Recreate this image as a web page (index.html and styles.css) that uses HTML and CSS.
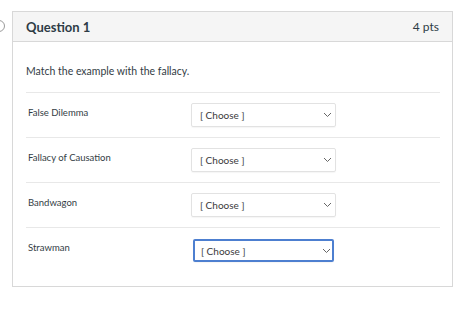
FILE: index.html
```html
<!DOCTYPE html>
<html>
<head>
<meta charset="utf-8">
<link rel="stylesheet" href="styles.css">
</head>
<body>
<div class="page">
  <span class="marker"></span>
  <div class="card">
    <div class="card-header">
      <span class="title">Question 1</span>
      <span class="pts">4 pts</span>
    </div>
    <div class="card-body">
      <p class="prompt">Match the example with the fallacy.</p>
      <div class="row">
        <div class="label">False Dilemma</div>
        <div class="select"><span>[ Choose ]</span><svg width="9" height="6" viewBox="0 0 9 6"><path d="M1 1 L4.5 4.5 L8 1" fill="none" stroke="#666" stroke-width="1"/></svg></div>
      </div>
      <div class="row">
        <div class="label">Fallacy of Causation</div>
        <div class="select"><span>[ Choose ]</span><svg width="9" height="6" viewBox="0 0 9 6"><path d="M1 1 L4.5 4.5 L8 1" fill="none" stroke="#666" stroke-width="1"/></svg></div>
      </div>
      <div class="row">
        <div class="label">Bandwagon</div>
        <div class="select"><span>[ Choose ]</span><svg width="9" height="6" viewBox="0 0 9 6"><path d="M1 1 L4.5 4.5 L8 1" fill="none" stroke="#666" stroke-width="1"/></svg></div>
      </div>
      <div class="row last">
        <div class="label">Strawman</div>
        <div class="select focused"><span>[ Choose ]</span><svg width="9" height="6" viewBox="0 0 9 6"><path d="M1 1 L4.5 4.5 L8 1" fill="none" stroke="#666" stroke-width="1"/></svg></div>
      </div>
    </div>
  </div>
</div>
</body>
</html>
```

FILE: styles.css
```css
* { box-sizing: border-box; }
html, body { margin: 0; padding: 0; background: #fff; }
body {
  font-family: Lato, "Open Sans", sans-serif;
  color: #2d3b45;
  width: 474px;
  height: 310px;
  overflow: hidden;
}
.page {
  position: relative;
  padding: 11px 0 0 12px;
}
.marker {
  position: absolute;
  left: -7px;
  top: 20px;
  width: 12px;
  height: 12px;
  border: 1px solid #9a9a9a;
  border-radius: 50%;
}
.card {
  width: 441px;
  border: 1px solid #d8d8d8;
  background: #fff;
}
.card-header {
  display: flex;
  justify-content: space-between;
  align-items: center;
  height: 30px;
  padding: 0 13px 0 13px;
  background: #f5f5f5;
  border-bottom: 1px solid #d8d8d8;
}
.title {
  font-weight: 700;
  font-size: 13px;
  color: #2d3b45;
}
.pts {
  font-size: 12px;
  color: #2d3b45;
}
.card-body {
  padding: 21px 12px 24px 13px;
}
.prompt {
  margin: 0 0 13px 0;
  font-size: 10.5px;
  line-height: 16px;
  color: #333d45;
}
.row {
  display: flex;
  border-top: 1px solid #e8e8e8;
  padding: 10px 0 10px 0;
}
.row.last { padding-bottom: 0; }
.label {
  width: 165px;
  padding: 3px 0 0 2px;
  font-size: 9.5px;
  line-height: 13px;
  color: #333d45;
}
.select {
  width: 145px;
  height: 24px;
  border: 1px solid #e2e2e2;
  border-radius: 2px;
  box-shadow: 0 1px 1px rgba(0,0,0,0.04);
  display: flex;
  align-items: center;
  justify-content: space-between;
  padding: 0 3px 0 8px;
  font-size: 10px;
  color: #3a3a3a;
}
.select.focused {
  width: 141px;
  height: 23px;
  margin: 1px 0 0 2px;
  border: 2px solid #4d7fd0;
  padding: 0 1px 0 6px;
}
```
